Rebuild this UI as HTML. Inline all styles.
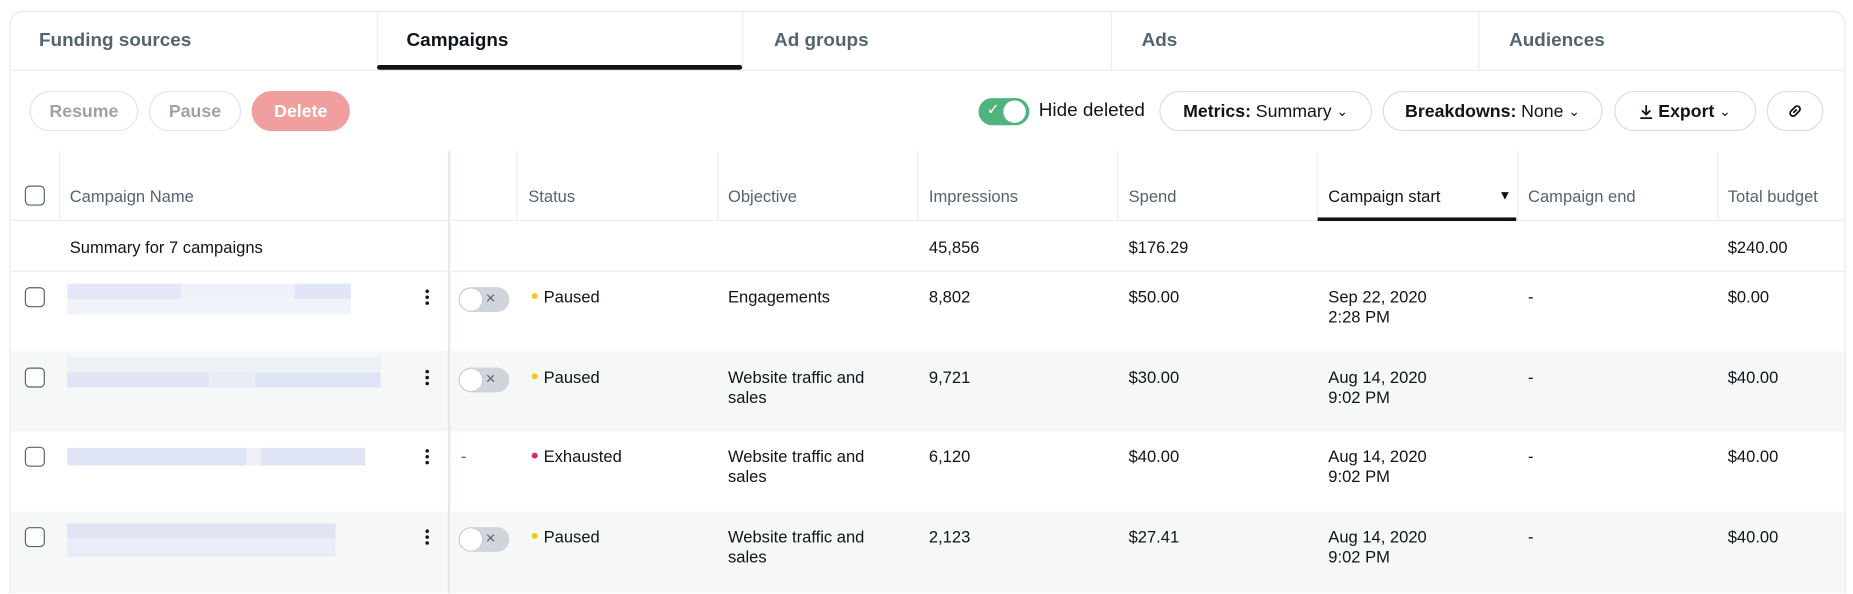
<!DOCTYPE html>
<html><head><meta charset="utf-8">
<style>
*{box-sizing:border-box;margin:0;padding:0}
html,body{width:1853px;height:594px;overflow:hidden;background:#fff;font-family:"Liberation Sans",Arial,sans-serif}
#clip{position:absolute;left:0;top:0;width:1853px;height:594px;overflow:hidden}
#w{position:absolute;left:0;top:0;width:1568px;height:502px;overflow:hidden;transform:scale(1.18176);transform-origin:0 0}
.a{position:absolute}
.card{left:8px;top:9px;width:1554px;height:493px;border:1px solid #e6e9eb;border-bottom:0;border-radius:12px 12px 0 0;overflow:hidden}
.tab{top:26px;font-size:16px;font-weight:bold;color:#536471}
.vl{width:1px;background:#eceef0}
.hl{height:1px;background:#eceef0}
.btn{height:34px;border:1px solid #e1e6ea;border-radius:17px;font-size:15px;font-weight:bold;color:#9aa3ab;display:flex;align-items:center;justify-content:center;top:77px}
.dd{height:34px;border:1px solid #d7dde2;border-radius:17px;font-size:15px;color:#0f1419;display:flex;align-items:center;justify-content:center;top:77px;gap:4px}
.th{top:158px;font-size:14px;color:#536471}
.td{font-size:14px;color:#0f1419;line-height:17px}
.cb{width:17px;height:17px;border:1.5px solid #536471;border-radius:4px;background:#fff}
.tg{width:43px;height:21px;border-radius:11px;background:#cfd5da}
.tg i{position:absolute;left:1px;top:1px;width:19px;height:19px;border-radius:50%;background:#fff;box-shadow:0 0 1px #aaa}
.tg b{position:absolute;left:23px;top:1px;font-size:14px;font-weight:normal;color:#536471}
.dot{display:inline-block;width:5px;height:5px;border-radius:50%;margin-right:5px;vertical-align:middle;position:relative;top:-2px}
.kb{width:3px}
.kb i{display:block;width:3px;height:3px;border-radius:50%;background:#0f1419;margin-bottom:2px}
.blur{height:13px}
</style></head><body><div id="clip"><div id="w">
<div class="a" style="left:8px;top:297px;width:1554px;height:68px;background:#f6f8f8"></div>
<div class="a" style="left:8px;top:433px;width:1554px;height:69px;background:#f6f8f8"></div>
<div class="a card"></div>
<div class="a hl" style="left:8px;top:59px;width:1554px"></div>
<div class="a vl" style="left:319px;top:9px;height:50px"></div>
<div class="a vl" style="left:628px;top:9px;height:50px"></div>
<div class="a vl" style="left:940px;top:9px;height:50px"></div>
<div class="a vl" style="left:1251px;top:9px;height:50px"></div>
<div class="a tab" style="left:33px">Funding sources</div>
<div class="a tab" style="left:344px;color:#0f1419">Campaigns</div>
<div class="a tab" style="left:655px">Ad groups</div>
<div class="a tab" style="left:966px">Ads</div>
<div class="a tab" style="left:1277px">Audiences</div>
<div class="a" style="left:319px;top:55px;width:309px;height:4px;background:#0f1419;border-radius:2px"></div>

<div class="a btn" style="left:25px;width:92px">Resume</div>
<div class="a btn" style="left:126px;width:78px">Pause</div>
<div class="a btn" style="left:213px;width:83px;background:#f09e9e;border-color:#f09e9e;color:#fff">Delete</div>

<div class="a" style="left:828px;top:83px;width:43px;height:23px;border-radius:12px;background:#4fb37b"><span class="a" style="left:7px;top:2px;color:#fff;font-size:13px">✓</span><i class="a" style="left:21px;top:2px;width:19px;height:19px;border-radius:50%;background:#fff"></i></div>
<div class="a" style="left:879px;top:85px;font-size:16px;color:#0f1419">Hide deleted</div>
<div class="a dd" style="left:981px;width:180px"><b>Metrics:</b>Summary <span style="font-size:12px">&#8964;</span></div>
<div class="a dd" style="left:1170px;width:186px"><b>Breakdowns:</b>None <span style="font-size:12px">&#8964;</span></div>
<div class="a dd" style="left:1366px;width:120px"><svg width="12" height="13" viewBox="0 0 12 13"><path d="M6 1v8M2.5 5.5L6 9l3.5-3.5M1 12h10" stroke="#0f1419" stroke-width="1.5" fill="none"/></svg><b>Export</b> <span style="font-size:12px">&#8964;</span></div>
<div class="a dd" style="left:1495px;width:48px"><svg width="14" height="14" viewBox="0 0 14 14"><path d="M6 8l2-2M5 5.5L7 3.5a2.3 2.3 0 013.5 3.5L8.5 9M9 8.5L7 10.5a2.3 2.3 0 01-3.5-3.5L5.5 5" stroke="#0f1419" stroke-width="1.5" fill="none" stroke-linecap="round"/></svg></div>

<div class="a vl" style="left:50px;top:128px;height:58px"></div>
<div class="a vl" style="left:437px;top:128px;height:58px"></div>
<div class="a vl" style="left:607px;top:128px;height:58px"></div>
<div class="a vl" style="left:776px;top:128px;height:58px"></div>
<div class="a vl" style="left:945px;top:128px;height:58px"></div>
<div class="a vl" style="left:1114px;top:128px;height:58px"></div>
<div class="a vl" style="left:1284px;top:128px;height:58px"></div>
<div class="a vl" style="left:1453px;top:128px;height:58px"></div>
<div class="a" style="left:379px;top:128px;width:2px;height:374px;background:#e6e9eb"></div>
<div class="a hl" style="left:8px;top:186px;width:1554px"></div>
<div class="a hl" style="left:8px;top:229px;width:1554px"></div>
<div class="a" style="left:1115px;top:184px;width:168px;height:3px;background:#0f1419"></div>

<div class="a cb" style="left:21px;top:157px"></div>
<div class="a th" style="left:59px">Campaign Name</div>
<div class="a th" style="left:447px">Status</div>
<div class="a th" style="left:616px">Objective</div>
<div class="a th" style="left:786px">Impressions</div>
<div class="a th" style="left:955px">Spend</div>
<div class="a th" style="left:1124px;color:#0f1419">Campaign start</div>
<div class="a th" style="left:1268px;color:#0f1419;font-size:11px;top:160px">▼</div>
<div class="a th" style="left:1293px">Campaign end</div>
<div class="a th" style="left:1462px">Total budget</div>

<div class="a td" style="left:59px;top:201px">Summary for 7 campaigns</div>
<div class="a td" style="left:786px;top:201px">45,856</div>
<div class="a td" style="left:955px;top:201px">$176.29</div>
<div class="a td" style="left:1462px;top:201px">$240.00</div>

<div class="a cb" style="left:21px;top:243px"></div>
<div class="a blur" style="left:57px;top:240px;width:240px;background:linear-gradient(90deg,#e3e8f8 0 40%,#eef1fa 40% 80%,#e0e6f7 80%)"></div>
<div class="a blur" style="left:57px;top:253px;width:240px;background:#f1f3fb"></div>
<div class="a kb" style="left:360px;top:245px"><i></i><i></i><i></i></div>
<div class="a tg" style="left:388px;top:243px"><i></i><b>×</b></div>
<div class="a td" style="left:450px;top:243px"><span class="dot" style="background:#f5c518"></span>Paused</div>
<div class="a td" style="left:616px;top:243px">Engagements</div>
<div class="a td" style="left:786px;top:243px">8,802</div>
<div class="a td" style="left:955px;top:243px">$50.00</div>
<div class="a td" style="left:1124px;top:243px">Sep 22, 2020<br>2:28 PM</div>
<div class="a td" style="left:1293px;top:243px">-</div>
<div class="a td" style="left:1462px;top:243px">$0.00</div>

<div class="a cb" style="left:21px;top:311px"></div>
<div class="a blur" style="left:57px;top:302px;width:265px;background:#edf0f5"></div>
<div class="a blur" style="left:57px;top:315px;width:265px;background:linear-gradient(90deg,#dfe5f5 0 45%,#e8ecf6 45% 60%,#dde4f5 60%)"></div>
<div class="a kb" style="left:360px;top:313px"><i></i><i></i><i></i></div>
<div class="a tg" style="left:388px;top:311px"><i></i><b>×</b></div>
<div class="a td" style="left:450px;top:311px"><span class="dot" style="background:#f5c518"></span>Paused</div>
<div class="a td" style="left:616px;top:311px">Website traffic and<br>sales</div>
<div class="a td" style="left:786px;top:311px">9,721</div>
<div class="a td" style="left:955px;top:311px">$30.00</div>
<div class="a td" style="left:1124px;top:311px">Aug 14, 2020<br>9:02 PM</div>
<div class="a td" style="left:1293px;top:311px">-</div>
<div class="a td" style="left:1462px;top:311px">$40.00</div>

<div class="a cb" style="left:21px;top:378px"></div>
<div class="a blur" style="left:57px;top:379px;width:252px;height:15px;background:linear-gradient(90deg,#dfe5f6 0 60%,#eef1fa 60% 65%,#dfe5f6 65%)"></div>
<div class="a kb" style="left:360px;top:380px"><i></i><i></i><i></i></div>
<div class="a td" style="left:390px;top:378px;color:#536471">-</div>
<div class="a td" style="left:450px;top:378px"><span class="dot" style="background:#e0245e"></span>Exhausted</div>
<div class="a td" style="left:616px;top:378px">Website traffic and<br>sales</div>
<div class="a td" style="left:786px;top:378px">6,120</div>
<div class="a td" style="left:955px;top:378px">$40.00</div>
<div class="a td" style="left:1124px;top:378px">Aug 14, 2020<br>9:02 PM</div>
<div class="a td" style="left:1293px;top:378px">-</div>
<div class="a td" style="left:1462px;top:378px">$40.00</div>

<div class="a cb" style="left:21px;top:446px"></div>
<div class="a blur" style="left:57px;top:443px;width:227px;background:#dfe5f5"></div>
<div class="a blur" style="left:57px;top:456px;width:227px;height:15px;background:#eaedf7"></div>
<div class="a kb" style="left:360px;top:448px"><i></i><i></i><i></i></div>
<div class="a tg" style="left:388px;top:446px"><i></i><b>×</b></div>
<div class="a td" style="left:450px;top:446px"><span class="dot" style="background:#f5c518"></span>Paused</div>
<div class="a td" style="left:616px;top:446px">Website traffic and<br>sales</div>
<div class="a td" style="left:786px;top:446px">2,123</div>
<div class="a td" style="left:955px;top:446px">$27.41</div>
<div class="a td" style="left:1124px;top:446px">Aug 14, 2020<br>9:02 PM</div>
<div class="a td" style="left:1293px;top:446px">-</div>
<div class="a td" style="left:1462px;top:446px">$40.00</div>
</div></div></body></html>
